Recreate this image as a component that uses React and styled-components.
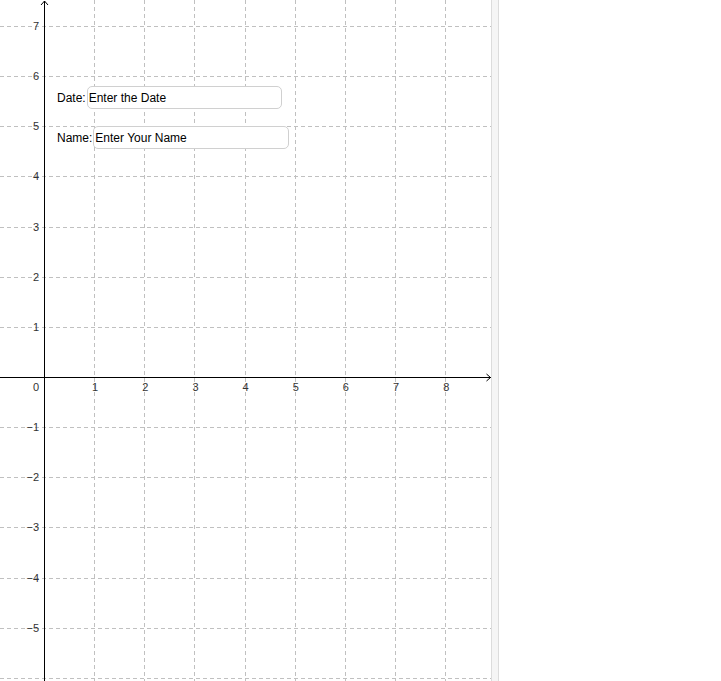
import React from 'react'
import styled, { createGlobalStyle } from 'styled-components'

const GlobalStyle = createGlobalStyle`
  html, body {
    margin: 0;
    padding: 0;
    background: #fff;
  }
  body {
    font-family: "Liberation Sans", Arial, sans-serif;
  }
`

const Page = styled.div`
  display: flex;
  width: 721px;
  height: 681px;
  overflow: hidden;
  background: #fff;
`

const GraphView = styled.div`
  position: relative;
  width: 491px;
  height: 681px;
  flex: none;
  overflow: hidden;
`

const Splitter = styled.div`
  width: 6px;
  flex: none;
  background: #f5f5f5;
  border-left: 1px solid #dcdcdc;
  border-right: 1px solid #dcdcdc;
`

const Rest = styled.div`
  flex: 1;
  background: #fff;
`

const Field = styled.label`
  position: absolute;
  left: ${p => p.$x}px;
  top: ${p => p.$y}px;
  display: flex;
  align-items: center;
  gap: 1px;
  font-size: 12px;
  color: #000;
`

const FieldBox = styled.div`
  width: ${p => p.$w}px;
  height: 20px;
  box-sizing: content-box;
  border: 1px solid #d0d0d0;
  border-radius: 5px;
  background: #fff;
  display: flex;
  align-items: center;
  padding: 1px 0 0 1px;
  font-size: 12px;
  color: #000;
  white-space: nowrap;
`

const ORIGIN_X = 44
const ORIGIN_Y = 377
const UNIT = 50.15
const px = v => Math.round(v) + 0.5

const Grid = () => {
  const xs = [1, 2, 3, 4, 5, 6, 7, 8]
  const ys = [7, 6, 5, 4, 3, 2, 1, -1, -2, -3, -4, -5, -6]
  const ax = px(ORIGIN_X)
  const ay = px(ORIGIN_Y)
  return (
    <svg width="491" height="681" style={{ display: 'block' }}>
      <g stroke="#c0c0c0" strokeWidth="1" strokeDasharray="4 3">
        {xs.map(k => {
          const x = px(ORIGIN_X + k * UNIT)
          return <line key={'v' + k} x1={x} y1="0" x2={x} y2="681" />
        })}
        {ys.map(k => {
          const y = px(ORIGIN_Y - k * UNIT)
          return <line key={'h' + k} x1="0" y1={y} x2="491" y2={y} />
        })}
      </g>
      <g stroke="#000" strokeWidth="1" fill="none">
        <line x1={ax} y1="1" x2={ax} y2="681" />
        <line x1="0" y1={ay} x2="491" y2={ay} />
        <polyline points={`${ax - 3.5},5 ${ax},1 ${ax + 3.5},5`} />
        <polyline points={`486.5,${ay - 3.5} 490.5,${ay} 486.5,${ay + 3.5}`} />
      </g>
      <g fill="#333" fontSize="11" fontFamily="Liberation Sans, Arial, sans-serif">
        <text x="36" y="391" textAnchor="middle">0</text>
        {xs.map(k => (
          <text key={'xl' + k} x={ORIGIN_X + k * UNIT + 1} y="391" textAnchor="middle">{k}</text>
        ))}
        {ys.filter(k => k > -6).map(k => (
          <text key={'yl' + k} x="39" y={ORIGIN_Y - k * UNIT + 4} textAnchor="end">
            {k < 0 ? '\u2212' + -k : k}
          </text>
        ))}
      </g>
    </svg>
  )
}

const App = () => {
  return (
    <>
      <GlobalStyle />
      <Page>
        <GraphView>
          <Grid />
          <Field $x={57} $y={86}>
            Date:
            <FieldBox $w={192}>Enter the Date</FieldBox>
          </Field>
          <Field $x={57} $y={126}>
            Name:
            <FieldBox $w={193}>Enter Your Name</FieldBox>
          </Field>
        </GraphView>
        <Splitter />
        <Rest />
      </Page>
    </>
  )
}

export default App
